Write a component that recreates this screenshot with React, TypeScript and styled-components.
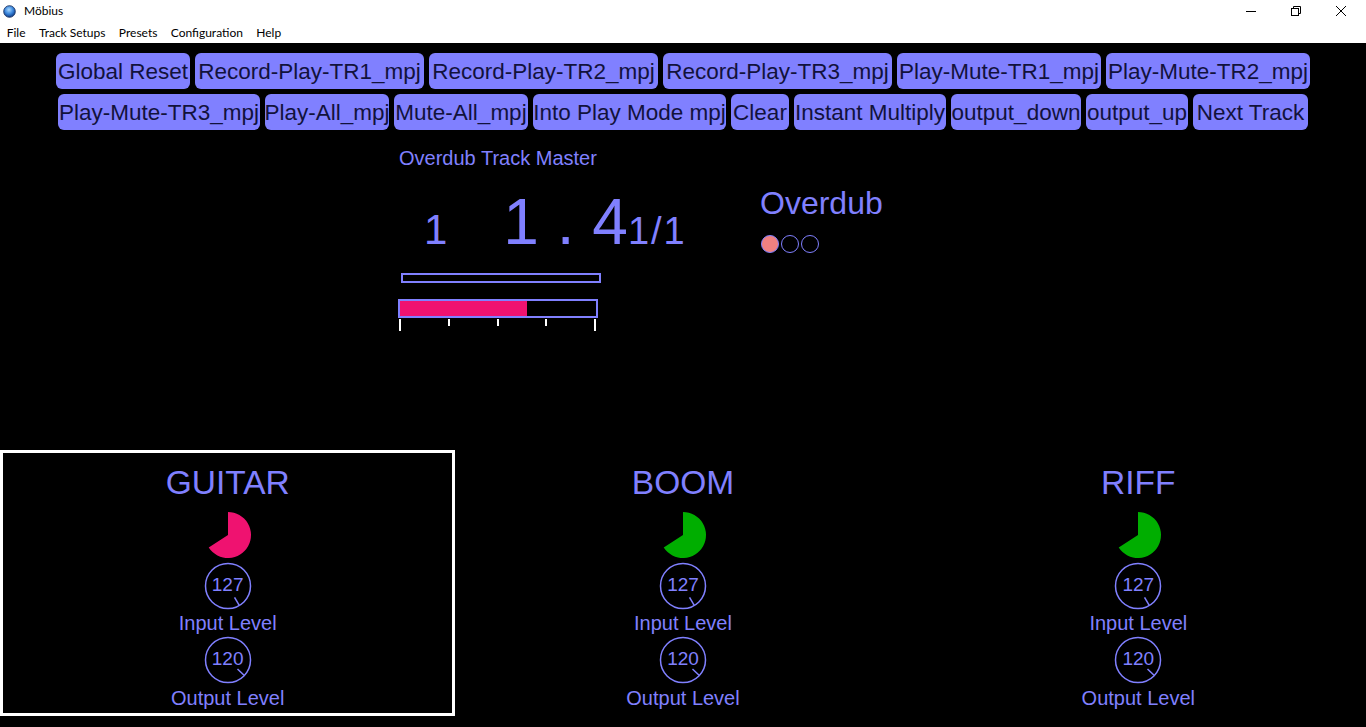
import React from "react";
import styled, { createGlobalStyle } from "styled-components";

const LAVENDER = "#8080ff";
const PINK = "#ef1270";
const GREEN = "#00ae00";

const GlobalStyle = createGlobalStyle`
  html, body, #root { margin: 0; padding: 0; height: 100%; }
  body { background: #000; overflow: hidden; }
  * { box-sizing: border-box; }
`;

const Window = styled.div`
  height: 100vh;
  display: flex;
  flex-direction: column;
  background: #000;
  font-family: "Liberation Sans", Arial, sans-serif;
`;

/* ---------- window chrome ---------- */

const TitleBar = styled.div`
  height: 22px;
  flex: none;
  display: flex;
  align-items: center;
  background: #fff;
  padding-left: 3px;
  font-family: Lato, "Liberation Sans", sans-serif;
  font-size: 12px;
  color: #000;
`;

const AppTitle = styled.span`
  margin-left: 8px;
  line-height: 14px;
`;

const WindowControls = styled.div`
  margin-left: auto;
  align-self: flex-start;
  display: flex;
  padding-right: 3px;
`;

const ControlButton = styled.div`
  width: 45px;
  height: 21px;
  display: flex;
  align-items: center;
  justify-content: center;
  svg { display: block; }
`;

const MenuBar = styled.div`
  height: 21px;
  flex: none;
  display: flex;
  align-items: center;
  background: #fff;
  font-family: Lato, "Liberation Sans", sans-serif;
  font-size: 12px;
  color: #000;
`;

const MenuItem = styled.span`
  padding: 0 6.7px;
  line-height: 21px;
`;

/* ---------- button bank ---------- */

const ButtonBank = styled.div`
  display: flex;
  flex-direction: column;
  gap: 5px;
  padding-top: 10px;
`;

const ButtonRow = styled.div`
  display: flex;
  justify-content: center;
  gap: 5px;
`;

const BankButton = styled.div<{ $w: number }>`
  width: ${(p) => p.$w}px;
  height: 36px;
  flex: none;
  display: flex;
  justify-content: center;
  padding-top: 2px;
  background: ${LAVENDER};
  border-radius: 6px;
  color: #12123c;
  font-size: 22.5px;
  line-height: 34px;
  white-space: nowrap;
`;

/* ---------- loop status ---------- */

const StatusArea = styled.div`
  display: flex;
  padding-left: 398px;
  margin-top: 17px;
  color: ${LAVENDER};
`;

const LoopDisplay = styled.div`
  width: 205px;
  display: flex;
  flex-direction: column;
`;

const LoopTitle = styled.div`
  margin-left: 1px;
  font-size: 20px;
  line-height: 23px;
  white-space: nowrap;
`;

const Counter = styled.div`
  display: flex;
  align-items: baseline;
  margin-top: 20px;
  white-space: pre;
`;

const LoopNumber = styled.span`
  margin-left: 26px;
  font-size: 42px;
  line-height: 1;
`;

const CycleNumber = styled.span`
  margin-left: 56px;
  font-size: 64px;
  line-height: 1;
`;

const CycleFraction = styled.span`
  font-size: 38px;
  line-height: 1;
  letter-spacing: 2px;
`;

const ThinMeter = styled.div`
  margin: 19px 0 0 3px;
  width: 200px;
  height: 10px;
  border: 2px solid ${LAVENDER};
`;

const LoopMeter = styled.div`
  margin-top: 16px;
  width: 200px;
  height: 19px;
  border: 2px solid ${LAVENDER};
`;

const LoopFill = styled.div`
  height: 100%;
  background: ${PINK};
`;

const Ruler = styled.div`
  margin: 1px 0 0 1px;
  width: 197px;
  height: 12px;
  display: flex;
  justify-content: space-between;
  align-items: flex-start;
`;

const Tick = styled.div<{ $major?: boolean }>`
  width: 2px;
  height: ${(p) => (p.$major ? 12 : 7)}px;
  background: #fff;
`;

const ModeDisplay = styled.div`
  margin-left: 157px;
  padding-top: 38px;
  display: flex;
  flex-direction: column;
`;

const ModeName = styled.div`
  font-size: 32px;
  line-height: 37px;
`;

const LayerDots = styled.div`
  display: flex;
  gap: 2px;
  margin: 13px 0 0 1px;
`;

const LayerDot = styled.div<{ $on?: boolean }>`
  width: 18px;
  height: 18px;
  border-radius: 50%;
  border: 1.5px solid ${LAVENDER};
  background: ${(p) => (p.$on ? "#f08080" : "transparent")};
`;

/* ---------- tracks ---------- */

const TrackStrip = styled.div`
  margin-top: auto;
  padding-bottom: 11px;
  display: grid;
  grid-template-columns: repeat(3, 1fr);
`;

const TrackPanel = styled.div<{ $selected?: boolean }>`
  height: 266px;
  border: 3px solid ${(p) => (p.$selected ? "#fff" : "transparent")};
  padding-top: 10.5px;
  display: flex;
  flex-direction: column;
  align-items: center;
  color: ${LAVENDER};
`;

const TrackName = styled.div`
  font-size: 33.5px;
  line-height: 38px;
`;

const PieSvg = styled.svg`
  display: block;
  margin-top: 9px;
`;

const KnobBox = styled.div<{ $gap: number }>`
  position: relative;
  width: 48px;
  height: 48px;
  margin-top: ${(p) => p.$gap}px;
  display: flex;
  align-items: center;
  justify-content: center;
  padding-bottom: 3px;
  svg {
    position: absolute;
    inset: 0;
    display: block;
  }
`;

const KnobValue = styled.span`
  position: relative;
  font-size: 19px;
  line-height: 19px;
`;

const KnobLabel = styled.div`
  margin-top: 2.5px;
  font-size: 20px;
  line-height: 23px;
  white-space: nowrap;
`;

/* ---------- drawings ---------- */

const AppIcon = () => (
  <svg width="13" height="13" viewBox="0 0 13 13">
    <defs>
      <radialGradient id="orb" cx="45%" cy="35%" r="65%">
        <stop offset="0" stopColor="#a8d8ff" />
        <stop offset="0.55" stopColor="#3a86dc" />
        <stop offset="1" stopColor="#0d3a86" />
      </radialGradient>
    </defs>
    <circle cx="6.5" cy="6.5" r="5.8" fill="url(#orb)" stroke="#1b3464" strokeWidth="0.9" />
  </svg>
);

const MinimizeGlyph = () => (
  <svg width="10" height="10" viewBox="0 0 10 10">
    <line x1="0" y1="5.5" x2="10" y2="5.5" stroke="#000" strokeWidth="1" />
  </svg>
);

const RestoreGlyph = () => (
  <svg width="10" height="10" viewBox="0 0 10 10">
    <rect x="0.5" y="2.5" width="7" height="7" fill="none" stroke="#000" strokeWidth="1" />
    <path d="M2.5 2.5 V0.5 H9.5 V7.5 H7.5" fill="none" stroke="#000" strokeWidth="1" />
  </svg>
);

const CloseGlyph = () => (
  <svg width="10" height="10" viewBox="0 0 10 10">
    <path d="M0 0 L10 10 M10 0 L0 10" stroke="#000" strokeWidth="1" />
  </svg>
);

const Pie = ({ color, angle }: { color: string; angle: number }) => {
  const c = 24;
  const r = 23;
  const rad = (angle * Math.PI) / 180;
  const x = c + r * Math.sin(rad);
  const y = c - r * Math.cos(rad);
  return (
    <PieSvg width={48} height={48} viewBox="0 0 48 48">
      <path
        d={`M${c} ${c} L${c} ${c - r} A${r} ${r} 0 ${angle > 180 ? 1 : 0} 1 ${x.toFixed(2)} ${y.toFixed(2)} Z`}
        fill={color}
      />
    </PieSvg>
  );
};

const Knob = ({ value, gap }: { value: number; gap: number }) => {
  const c = 24;
  const r = 22.5;
  const a = ((-150 + (300 * value) / 127) * Math.PI) / 180;
  const p = (k: number) => ({ x: c + r * k * Math.sin(a), y: c - r * k * Math.cos(a) });
  const inner = p(0.58);
  const outer = p(1);
  return (
    <KnobBox $gap={gap}>
      <svg width={48} height={48} viewBox="0 0 48 48">
        <circle cx={c} cy={c} r={r} fill="none" stroke={LAVENDER} strokeWidth={1.5} />
        <line x1={inner.x} y1={inner.y} x2={outer.x} y2={outer.y} stroke={LAVENDER} strokeWidth={1.5} />
      </svg>
      <KnobValue>{value}</KnobValue>
    </KnobBox>
  );
};

/* ---------- data ---------- */

const bankRows: [string, number][][] = [
  [
    ["Global Reset", 134],
    ["Record-Play-TR1_mpj", 229],
    ["Record-Play-TR2_mpj", 229],
    ["Record-Play-TR3_mpj", 229],
    ["Play-Mute-TR1_mpj", 204],
    ["Play-Mute-TR2_mpj", 204],
  ],
  [
    ["Play-Mute-TR3_mpj", 202],
    ["Play-All_mpj", 124],
    ["Mute-All_mpj", 134],
    ["Into Play Mode mpj", 193],
    ["Clear", 58],
    ["Instant Multiply", 152],
    ["output_down", 130],
    ["output_up", 102],
    ["Next Track", 115],
  ],
];

const tracks = [
  { name: "GUITAR", color: PINK, selected: true, input: 127, output: 120 },
  { name: "BOOM", color: GREEN, selected: false, input: 127, output: 120 },
  { name: "RIFF", color: GREEN, selected: false, input: 127, output: 120 },
];

const menus = ["File", "Track Setups", "Presets", "Configuration", "Help"];

export default function App() {
  const loopProgress = 0.648;
  return (
    <Window>
      <GlobalStyle />
      <TitleBar>
        <AppIcon />
        <AppTitle>Möbius</AppTitle>
        <WindowControls>
          <ControlButton>
            <MinimizeGlyph />
          </ControlButton>
          <ControlButton>
            <RestoreGlyph />
          </ControlButton>
          <ControlButton>
            <CloseGlyph />
          </ControlButton>
        </WindowControls>
      </TitleBar>
      <MenuBar>
        {menus.map((m) => (
          <MenuItem key={m}>{m}</MenuItem>
        ))}
      </MenuBar>

      <ButtonBank>
        {bankRows.map((row, i) => (
          <ButtonRow key={i}>
            {row.map(([label, w]) => (
              <BankButton key={label} $w={w}>
                {label}
              </BankButton>
            ))}
          </ButtonRow>
        ))}
      </ButtonBank>

      <StatusArea>
        <LoopDisplay>
          <LoopTitle>Overdub Track Master</LoopTitle>
          <Counter>
            <LoopNumber>1</LoopNumber>
            <CycleNumber>1 . 4</CycleNumber>
            <CycleFraction>1/1</CycleFraction>
          </Counter>
          <ThinMeter />
          <LoopMeter>
            <LoopFill style={{ width: `${loopProgress * 100}%` }} />
          </LoopMeter>
          <Ruler>
            <Tick $major />
            <Tick />
            <Tick />
            <Tick />
            <Tick $major />
          </Ruler>
        </LoopDisplay>
        <ModeDisplay>
          <ModeName>Overdub</ModeName>
          <LayerDots>
            <LayerDot $on />
            <LayerDot />
            <LayerDot />
          </LayerDots>
        </ModeDisplay>
      </StatusArea>

      <TrackStrip>
        {tracks.map((t) => (
          <TrackPanel key={t.name} $selected={t.selected}>
            <TrackName>{t.name}</TrackName>
            <Pie color={t.color} angle={237} />
            <Knob value={t.input} gap={3} />
            <KnobLabel>Input Level</KnobLabel>
            <Knob value={t.output} gap={1} />
            <KnobLabel>Output Level</KnobLabel>
          </TrackPanel>
        ))}
      </TrackStrip>
    </Window>
  );
}
